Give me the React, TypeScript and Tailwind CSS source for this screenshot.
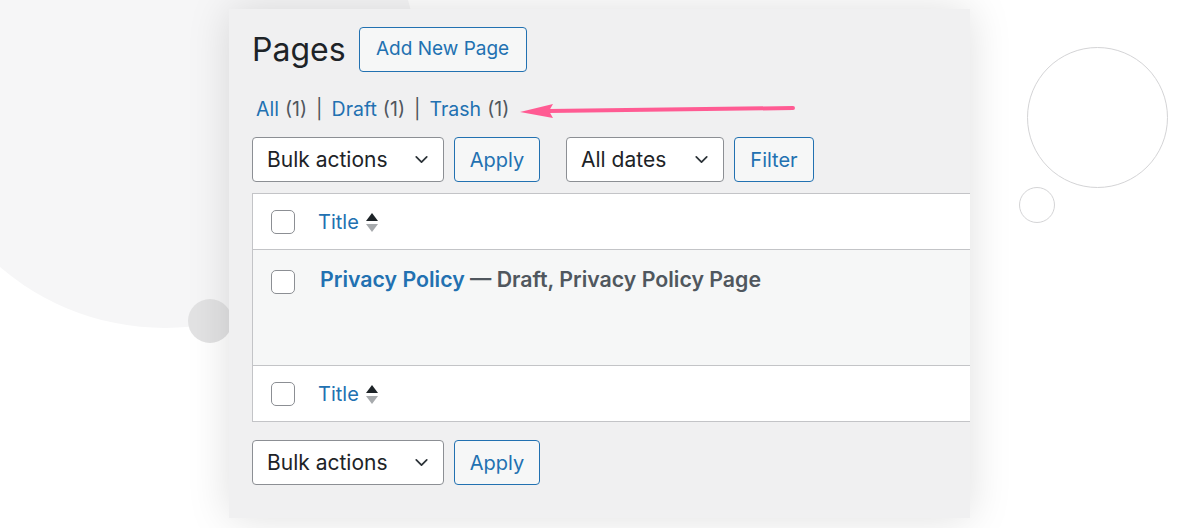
import { ChevronDown } from "lucide-react";

const font = { fontFamily: "Inter, 'Noto Sans', sans-serif" };

function SelectBox({ label, width }: { label: string; width: string }) {
  return (
    <div
      className={`flex h-[45px] ${width} items-center justify-between rounded-[4px] border border-[#8c8f94] bg-white pl-[14px] pr-[11px] text-[21px] text-[#1d2327]`}
    >
      <span>{label}</span>
      <ChevronDown size={21} strokeWidth={2} className="text-[#2c3338]" />
    </div>
  );
}

function SecondaryButton({ label, width }: { label: string; width: string }) {
  return (
    <button
      className={`flex h-[45px] ${width} items-center justify-center rounded-[4px] border border-[#2271b1] bg-[#f6f7f7] text-[20px] text-[#2271b1]`}
    >
      {label}
    </button>
  );
}

function Checkbox() {
  return <div className="h-[24px] w-[24px] shrink-0 rounded-[5px] border border-[#8c8f94] bg-white" />;
}

function SortArrows() {
  return (
    <svg width="12" height="24" viewBox="0 0 12 24" className="ml-[7px]">
      <polygon points="6,3 12,11 0,11" fill="#1d2327" />
      <polygon points="0,14 12,14 6,22" fill="#a7aaad" />
    </svg>
  );
}

function TitleRow({ border }: { border: string }) {
  return (
    <div className={`flex h-[56px] items-center bg-white pl-[18px] ${border}`}>
      <Checkbox />
      <span className="ml-[23px] text-[20px] text-[#2271b1]">Title</span>
      <SortArrows />
    </div>
  );
}

export default function App() {
  return (
    <div className="relative h-[528px] w-[1200px] overflow-hidden bg-white" style={font}>
      {/* decorative background */}
      <div className="absolute left-[-89px] top-[-180px] h-[508px] w-[508px] rounded-full bg-[#f6f6f7]" />
      <div className="absolute left-[188px] top-[299px] h-[44px] w-[44px] rounded-full bg-[#e2e2e3]" />
      <div className="absolute left-[1027px] top-[47px] h-[141px] w-[141px] rounded-full border border-[#d4d4d6]" />
      <div className="absolute left-[1019px] top-[187px] h-[36px] w-[36px] rounded-full border border-[#d4d4d6]" />

      <div className="relative z-10 ml-[229px] mt-[9px] h-[509px] w-[741px] overflow-hidden bg-[#f0f0f1] pl-[23px] pt-[18px] shadow-[0_0_40px_rgba(0,0,0,0.13)]">
        <div className="flex items-center gap-[13px]">
          <h1 className="text-[32px] font-normal leading-none text-[#1d2327]">Pages</h1>
          <button className="h-[45px] w-[168px] rounded-[4px] border border-[#2271b1] bg-[#f6f7f7] text-[19px] text-[#2271b1]">
            Add New Page
          </button>
        </div>

        <div className="mt-[26px] flex h-[24px] items-center pl-[4px] text-[19.5px] text-[#50575e]">
          <span className="text-[#2271b1]">All</span>
          <span className="ml-[6px]">(1)</span>
          <span className="mx-[9px] text-[#50575e]">|</span>
          <span className="text-[#2271b1]">Draft</span>
          <span className="ml-[6px]">(1)</span>
          <span className="mx-[9px] text-[#50575e]">|</span>
          <span className="text-[#2271b1]">Trash</span>
          <span className="ml-[6px]">(1)</span>
        </div>

        <div className="mt-[15px] flex items-center">
          <SelectBox label="Bulk actions" width="w-[192px]" />
          <div className="ml-[10px]">
            <SecondaryButton label="Apply" width="w-[86px]" />
          </div>
          <div className="ml-[26px]">
            <SelectBox label="All dates" width="w-[158px]" />
          </div>
          <div className="ml-[10px]">
            <SecondaryButton label="Filter" width="w-[80px]" />
          </div>
        </div>

        <div className="mt-[11px] w-[760px] border border-[#c3c4c7]">
          <TitleRow border="border-b border-[#c3c4c7]" />
          <div className="flex h-[115px] items-start bg-[#f6f7f7] pl-[18px] pt-[20px]">
            <Checkbox />
            <div className="ml-[25px] mt-[-6px] text-[21.3px] font-semibold text-[#50575e]">
              <span className="text-[#2271b1]">Privacy Policy</span> — Draft, Privacy Policy Page
            </div>
          </div>
          <TitleRow border="border-t border-[#c3c4c7]" />
        </div>

        <div className="mt-[18px] flex items-center">
          <SelectBox label="Bulk actions" width="w-[192px]" />
          <div className="ml-[10px]">
            <SecondaryButton label="Apply" width="w-[86px]" />
          </div>
        </div>
      </div>

      {/* pointer arrow */}
      <svg className="absolute left-[500px] top-[90px] z-20" width="310" height="40" viewBox="0 0 310 40">
        <line x1="48" y1="21" x2="293" y2="18" stroke="#ff5b93" strokeWidth="4" strokeLinecap="round" />
        <polygon points="20,22 53,14 49,21 53,28" fill="#ff5b93" />
      </svg>
    </div>
  );
}
